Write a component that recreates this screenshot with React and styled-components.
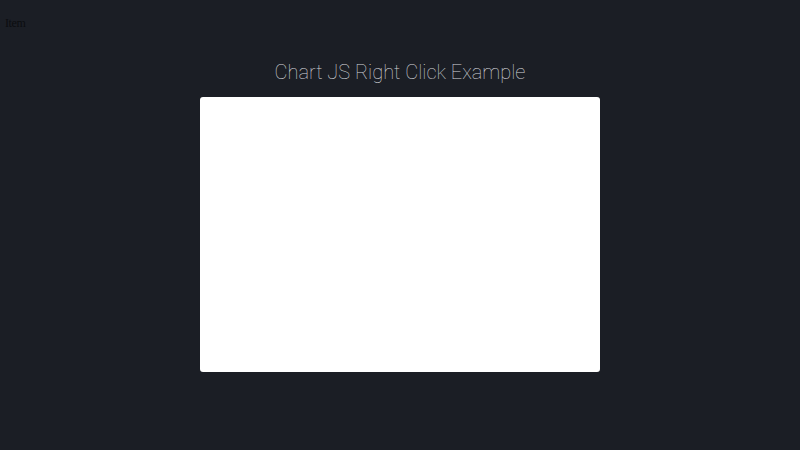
import React from "react";
import styled, { createGlobalStyle } from "styled-components";

const GlobalStyle = createGlobalStyle`
  html, body {
    margin: 0;
    padding: 0;
    background-color: #1b1e25;
    height: 100%;
  }
`;

const ContextMenu = styled.ul`
  position: absolute;
  top: 16px;
  left: 5px;
  margin: 0;
  padding: 0;
  list-style: none;
  font-family: "Liberation Serif", serif;
  font-size: 12px;
  letter-spacing: -0.4px;
  color: #0b0d10;
`;

const Page = styled.div`
  display: flex;
  flex-direction: column;
  align-items: center;
  padding-top: 58px;
`;

const Title = styled.h1`
  margin: 0 0 11px 0;
  font-family: Roboto, sans-serif;
  font-weight: 100;
  font-size: 20px;
  line-height: 28px;
  color: #d3d5da;
`;

const ChartBox = styled.div`
  width: 400px;
  height: 275px;
  background-color: white;
  border-radius: 3px;
`;

export default function App() {
  return (
    <>
      <GlobalStyle />
      <ContextMenu>
        <li>Item</li>
      </ContextMenu>
      <Page>
        <Title>Chart JS Right Click Example</Title>
        <ChartBox />
      </Page>
    </>
  );
}
